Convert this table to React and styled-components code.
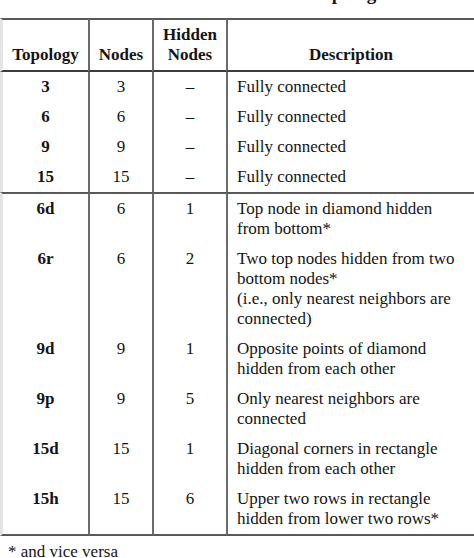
// 토폴로지 표

import React from "react";
import styled, { createGlobalStyle } from "styled-components";

const fullRows = [
  { name: "3", nodes: "3", hidden: "–", desc: ["Fully connected"] },
  { name: "6", nodes: "6", hidden: "–", desc: ["Fully connected"] },
  { name: "9", nodes: "9", hidden: "–", desc: ["Fully connected"] },
  { name: "15", nodes: "15", hidden: "–", desc: ["Fully connected"] },
];

const hiddenRows = [
  { name: "6d", nodes: "6", hidden: "1", desc: ["Top node in diamond hidden", "from bottom*"] },
  {
    name: "6r",
    nodes: "6",
    hidden: "2",
    desc: [
      "Two top nodes hidden from two",
      "bottom nodes*",
      "(i.e., only nearest neighbors are",
      "connected)",
    ],
  },
  { name: "9d", nodes: "9", hidden: "1", desc: ["Opposite points of diamond", "hidden from each other"] },
  { name: "9p", nodes: "9", hidden: "5", desc: ["Only nearest neighbors are", "connected"] },
  { name: "15d", nodes: "15", hidden: "1", desc: ["Diagonal corners in rectangle", "hidden from each other"] },
  { name: "15h", nodes: "15", hidden: "6", desc: ["Upper two rows in rectangle", "hidden from lower two rows*"] },
];

const Row = ({ row, first, last }) => (
  <tr>
    <Name first={first} last={last}>{row.name}</Name>
    <Cell first={first} last={last}>{row.nodes}</Cell>
    <Cell first={first} last={last}>{row.hidden}</Cell>
    <Desc first={first} last={last}>
      {row.desc.map((line, i) => (
        <React.Fragment key={i}>
          {i > 0 && <br />}
          {line}
        </React.Fragment>
      ))}
    </Desc>
  </tr>
);

const App = () => {
  return (
    <>
      <GlobalStyle />
      <Page>
        <Caption>Table 1. Simulated Network Topologies</Caption>
        <Table>
          <colgroup>
            <col style={{ width: "88px" }} />
            <col style={{ width: "64px" }} />
            <col style={{ width: "74px" }} />
            <col />
          </colgroup>
          <thead>
            <tr>
              <Head>Topology</Head>
              <Head>Nodes</Head>
              <Head>
                Hidden
                <br />
                Nodes
              </Head>
              <Head>Description</Head>
            </tr>
          </thead>
          <tbody>
            {fullRows.map((row) => (
              <Row key={row.name} row={row} />
            ))}
            {hiddenRows.map((row, i) => (
              <Row
                key={row.name}
                row={row}
                first={i === 0}
                last={i === hiddenRows.length - 1}
              />
            ))}
          </tbody>
        </Table>
        <Footnote>* and vice versa</Footnote>
      </Page>
    </>
  );
};

const GlobalStyle = createGlobalStyle`
  html, body {
    margin: 0;
    padding: 0;
    background: #fff;
  }
  body {
    font-family: "Liberation Serif", "Times New Roman", serif;
    color: #141414;
    overflow: hidden;
  }
`;

const Page = styled.div`
  width: 474px;
  height: 558px;
  overflow: hidden;
`;

const Caption = styled.div`
  margin-top: -16px;
  height: 20px;
  line-height: 20px;
  font-size: 19px;
  font-weight: bold;
  text-align: center;
  padding-left: 4px;
  margin-bottom: 14px;
`;

const Table = styled.table`
  width: 474px;
  table-layout: fixed;
  border-collapse: separate;
  border-spacing: 0;
  font-size: 17px;
  line-height: 20px;
`;

const Head = styled.th`
  font-size: 17px;
  font-weight: bold;
  vertical-align: bottom;
  text-align: center;
  padding: 5px 2px;
  border-top: 2px solid #595959;
  border-bottom: 2px solid #3c3c3c;
  & + & {
    border-left: 2px solid #6a6a6a;
  }
  &:first-child {
    border-left: 3px solid #e4e4e4;
  }
`;

const Cell = styled.td`
  text-align: center;
  vertical-align: top;
  padding: 5px 2px;
  border-left: 2px solid #6a6a6a;
  border-top: ${(props) => (props.first ? "2px solid #595959" : "none")};
  border-bottom: ${(props) => (props.last ? "2px solid #595959" : "none")};
`;

const Name = styled(Cell)`
  font-weight: bold;
  border-left: 3px solid #e4e4e4;
`;

const Desc = styled(Cell)`
  text-align: left;
  padding: 5px 2px 5px 9px;
  white-space: nowrap;
`;

const Footnote = styled.div`
  margin-top: 6px;
  padding-left: 8px;
  font-size: 17px;
  line-height: 20px;
`;

export default App;
